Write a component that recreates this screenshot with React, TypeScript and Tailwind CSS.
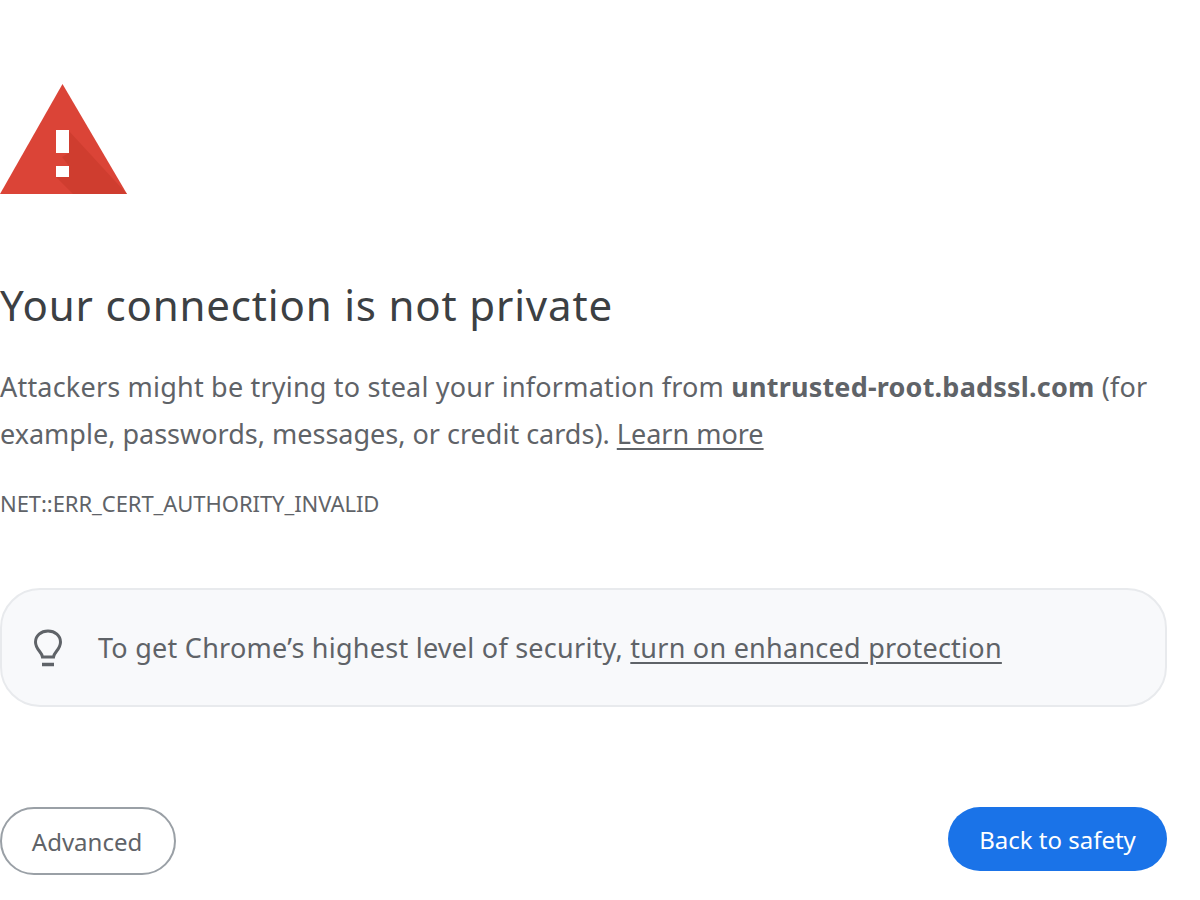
export default function App() {
  return (
    <div className="w-[1200px] h-[900px] overflow-hidden bg-white flex flex-col pr-[33px] pt-[84px] text-[#5f6368] font-['Noto_Sans',sans-serif]">
      <svg width="127" height="111" viewBox="0 0 127 111" className="block shrink-0">
        <polygon points="62.5,0 127,110 0,110" fill="#db4437" />
        <polygon points="69,47 127,110 73,110 56,93 69,93 69,82 62,73 69,69" fill="#c53929" opacity="0.55" />
        <rect x="56" y="46" width="13" height="23" fill="#ffffff" />
        <rect x="56" y="82" width="13" height="11" fill="#ffffff" />
      </svg>
      <h1 className="m-0 mt-[82px] text-[42px] leading-[56px] font-normal tracking-[0.83px] text-[#3c4043] whitespace-nowrap">Your connection is not private</h1>
      <p className="m-0 mt-[30px] text-[27px] leading-[47px]">
        <span className="tracking-[0.2px]">Attackers might be trying to steal your information from <b className="font-bold">untrusted-root.badssl.com</b> (for</span>
        <br />
        example, passwords, messages, or credit cards). <a className="underline underline-offset-4">Learn more</a>
      </p>
      <div className="mt-[31px] text-[22px] leading-[30px] tracking-[-0.06px] whitespace-nowrap">NET::ERR_CERT_AUTHORITY_INVALID</div>
      <div className="mt-[70px] h-[119px] rounded-[40px] border-2 border-[#e8eaed] bg-[#f8f9fb] flex items-center pl-[28px]">
        <svg width="36" height="38" viewBox="0 0 36 38" fill="none" stroke="#5f6368" strokeWidth="3" className="block shrink-0">
          <path d="M12.5 28 C12 23 5.5 20.5 5.5 13 C5.5 6.5 11 2 18 2 C25 2 30.5 6.5 30.5 13 C30.5 20.5 24 23 23.5 28 Z" />
          <path d="M12 35.5 H24" strokeWidth="3.5" />
        </svg>
        <div className="ml-[32px] text-[27px] leading-[36px] tracking-[0.25px] whitespace-nowrap">
          To get Chrome’s highest level of security, <a className="underline underline-offset-4">turn on enhanced protection</a>
        </div>
      </div>
      <div className="mt-[100px] flex justify-between items-start">
        <button className="h-[68px] w-[176px] pt-0.5 pr-0.5 rounded-[34px] border-2 border-[#9aa0a6] bg-white text-[24px] text-[#5f6368]">Advanced</button>
        <button className="h-[64px] w-[219px] pt-0.5 rounded-[32px] bg-[#1a73e8] text-[24px] text-white">Back to safety</button>
      </div>
    </div>
  );
}
